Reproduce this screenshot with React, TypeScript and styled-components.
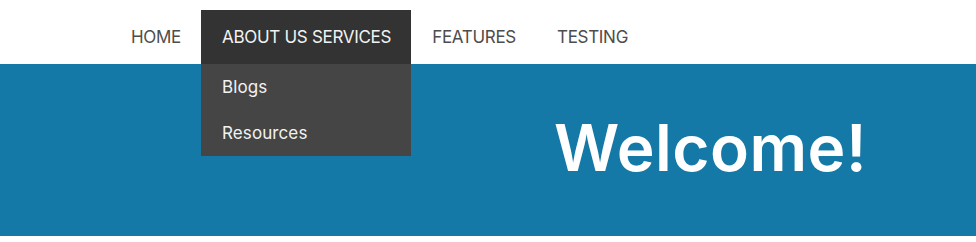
import React from 'react';
import styled, { createGlobalStyle } from 'styled-components';

const GlobalStyle = createGlobalStyle`
  html, body {
    margin: 0;
    padding: 0;
    background: #ffffff;
  }

  body {
    font-family: Inter, 'Open Sans', sans-serif;
  }
`;

const blue = '#1479a7';
const activeDark = '#333333';
const dropdownGrey = '#454545';

const Header = styled.header`
  background: #ffffff;
  padding: 10px 109px 0 110px;
  height: 54px;
`;

const NavList = styled.ul`
  display: flex;
  list-style: none;
  margin: 0;
  padding: 0;
  height: 54px;
`;

const NavItem = styled.li<{ $active?: boolean }>`
  position: relative;
  display: flex;
  align-items: center;
  padding: 0 20px 0 21px;
  height: 54px;
  font-size: 17px;
  letter-spacing: -0.3px;
  color: ${p => (p.$active ? '#f2f2f2' : '#4d4d4d')};
  background: ${p => (p.$active ? activeDark : 'transparent')};
  white-space: nowrap;
`;

const Dropdown = styled.ul`
  position: absolute;
  top: 54px;
  left: 0;
  right: 0;
  margin: 0;
  padding: 0;
  list-style: none;
  background: ${dropdownGrey};
  z-index: 2;
`;

const DropdownItem = styled.li`
  display: flex;
  align-items: center;
  height: 46px;
  padding: 0 20px 0 21px;
  font-size: 17px;
  color: #f2f2f2;
  letter-spacing: 0.1px;
`;

const Banner = styled.section`
  background: ${blue};
  height: 172px;
  padding: 0 109px;
  display: flex;
  justify-content: flex-end;
  align-items: flex-start;
`;

const Title = styled.h1`
  margin: 46px 0 0;
  font-size: 64px;
  font-weight: 600;
  line-height: 76px;
  color: #ffffff;
  letter-spacing: 0.5px;
`;

const App = () => (
  <>
    <GlobalStyle />
    <Header>
      <nav>
        <NavList>
          <NavItem>HOME</NavItem>
          <NavItem $active>
            ABOUT US SERVICES
            <Dropdown>
              <DropdownItem>Blogs</DropdownItem>
              <DropdownItem>Resources</DropdownItem>
            </Dropdown>
          </NavItem>
          <NavItem>FEATURES</NavItem>
          <NavItem>TESTING</NavItem>
        </NavList>
      </nav>
    </Header>
    <Banner>
      <Title>Welcome!</Title>
    </Banner>
  </>
);

export default App;
